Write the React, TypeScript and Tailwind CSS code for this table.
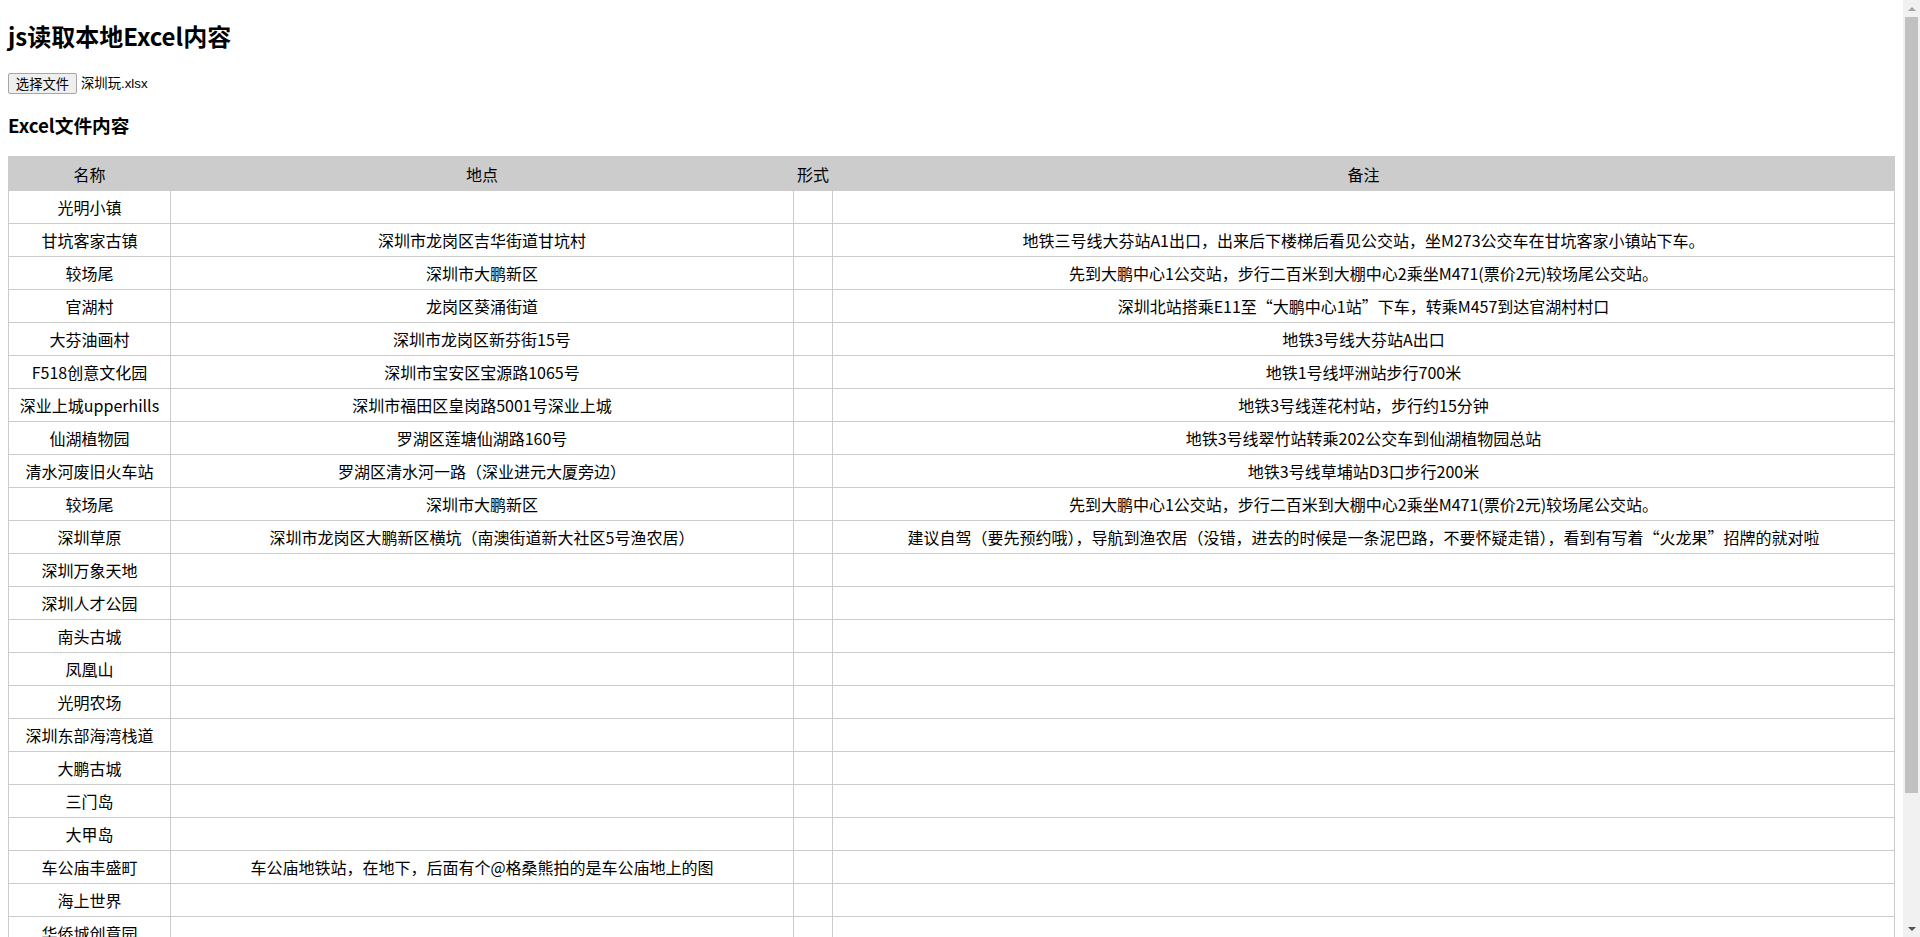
const rows: [string, string, string, string][] = [
  ["光明小镇", "", "", ""],
  ["甘坑客家古镇", "深圳市龙岗区吉华街道甘坑村", "", "地铁三号线大芬站A1出口，出来后下楼梯后看见公交站，坐M273公交车在甘坑客家小镇站下车。"],
  ["较场尾", "深圳市大鹏新区", "", "先到大鹏中心1公交站，步行二百米到大棚中心2乘坐M471(票价2元)较场尾公交站。"],
  ["官湖村", "龙岗区葵涌街道", "", "深圳北站搭乘E11至“大鹏中心1站”下车，转乘M457到达官湖村村口"],
  ["大芬油画村", "深圳市龙岗区新芬街15号", "", "地铁3号线大芬站A出口"],
  ["F518创意文化园", "深圳市宝安区宝源路1065号", "", "地铁1号线坪洲站步行700米"],
  ["深业上城upperhills", "深圳市福田区皇岗路5001号深业上城", "", "地铁3号线莲花村站，步行约15分钟"],
  ["仙湖植物园", "罗湖区莲塘仙湖路160号", "", "地铁3号线翠竹站转乘202公交车到仙湖植物园总站"],
  ["清水河废旧火车站", "罗湖区清水河一路（深业进元大厦旁边）", "", "地铁3号线草埔站D3口步行200米"],
  ["较场尾", "深圳市大鹏新区", "", "先到大鹏中心1公交站，步行二百米到大棚中心2乘坐M471(票价2元)较场尾公交站。"],
  ["深圳草原", "深圳市龙岗区大鹏新区横坑（南澳街道新大社区5号渔农居）", "", "建议自驾（要先预约哦），导航到渔农居（没错，进去的时候是一条泥巴路，不要怀疑走错），看到有写着“火龙果”招牌的就对啦"],
  ["深圳万象天地", "", "", ""],
  ["深圳人才公园", "", "", ""],
  ["南头古城", "", "", ""],
  ["凤凰山", "", "", ""],
  ["光明农场", "", "", ""],
  ["深圳东部海湾栈道", "", "", ""],
  ["大鹏古城", "", "", ""],
  ["三门岛", "", "", ""],
  ["大甲岛", "", "", ""],
  ["车公庙丰盛町", "车公庙地铁站，在地下，后面有个@格桑熊拍的是车公庙地上的图", "", ""],
  ["海上世界", "", "", ""],
  ["华侨城创意园", "", "", ""],
  ["深圳湾公园", "", "", ""],
  ["莲花山公园", "", "", ""],
  ["东门老街", "", "", ""],
  ["欢乐海岸", "", "", ""],
];

// fake window scrollbar, the screenshot was taken with a classic one
function Scrollbar() {
  return (
    <div className="fixed right-0 top-0 flex h-[937px] w-[17px] flex-col items-center bg-[#f1f1f1]">
      <div className="flex h-[17px] w-full items-center justify-center">
        <div className="h-0 w-0 border-x-[4px] border-b-[4px] border-x-transparent border-b-[#a3a3a3]" />
      </div>
      <div className="h-[776px] w-[13px] bg-[#c1c1c1]" />
      <div className="flex-1" />
      <div className="flex h-[17px] w-full items-center justify-center">
        <div className="h-0 w-0 border-x-[4px] border-t-[4px] border-x-transparent border-t-[#505050]" />
      </div>
    </div>
  );
}

export default function App() {
  return (
    <div className="bg-white pb-[8px] pl-[8px] pr-[25px] pt-[20px] font-['Noto_Sans_CJK_SC','Noto_Sans',sans-serif] text-black">
      <h2 className="text-[24px] font-bold leading-[32px]">js读取本地Excel内容</h2>

      <div className="mt-[20px] flex h-[22px] items-center text-[13.33px]">
        <button className="h-[21px] w-[69px] rounded-[2px] border border-[#a6a6a6] bg-[#efefef] text-[13.33px] leading-[19px] text-black">
          选择文件
        </button>
        <span className="ml-[4px] font-['Liberation_Sans','Noto_Sans_CJK_SC',sans-serif] leading-[19px]">深圳玩.xlsx</span>
      </div>

      <h3 className="mt-[18px] text-[18.72px] font-bold leading-[25px]">Excel文件内容</h3>

      <table className="mt-[19px] w-full table-fixed border-collapse text-[16px]">
        <colgroup>
          <col className="w-[162px]" />
          <col className="w-[623px]" />
          <col className="w-[39px]" />
          <col />
        </colgroup>
        <thead>
          <tr className="h-[34px] bg-[#cccccc]">
            <th className="border border-[#cccccc] p-0 font-normal leading-[22px]">名称</th>
            <th className="border border-[#cccccc] p-0 font-normal leading-[22px]">地点</th>
            <th className="border border-[#cccccc] p-0 font-normal leading-[22px]">形式</th>
            <th className="border border-[#cccccc] p-0 font-normal leading-[22px]">备注</th>
          </tr>
        </thead>
        <tbody>
          {rows.map((r, i) => (
            <tr key={i} className="h-[33px]">
              {r.map((c, j) => (
                <td key={j} className="whitespace-nowrap border border-[#cccccc] p-0 text-center leading-[22px]">
                  {c}
                </td>
              ))}
            </tr>
          ))}
        </tbody>
      </table>

      <Scrollbar />
    </div>
  );
}
